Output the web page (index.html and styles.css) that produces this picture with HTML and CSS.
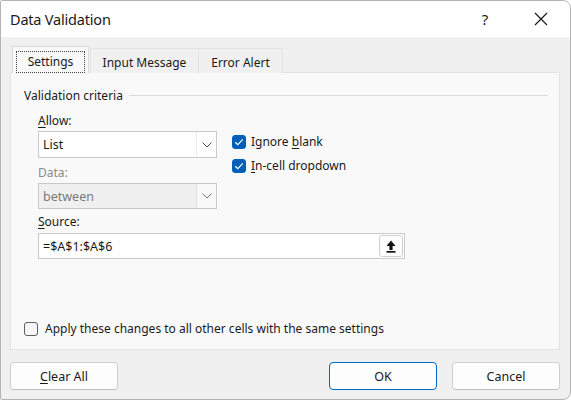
FILE: index.html
```html
<!DOCTYPE html>
<html>
<head>
<meta charset="utf-8">
<link rel="stylesheet" href="styles.css">
</head>
<body>
<div class="window">
  <div class="titlebar">
    <span class="title">Data Validation</span>
    <span class="help">?</span>
    <span class="close">
      <svg width="14" height="14" viewBox="0 0 14 14"><path d="M1 1L13 13M13 1L1 13" stroke="#1a1a1a" stroke-width="1.2" fill="none"/></svg>
    </span>
  </div>
  <div class="content">
    <div class="tabs">
      <div class="tab selected"><span class="focus">Settings</span></div>
      <div class="tab wide">Input Message</div>
      <div class="tab mid">Error Alert</div>
    </div>
    <div class="panel">
      <div class="group-head"><span>Validation criteria</span><span class="rule"></span></div>
      <div class="criteria">
        <div class="left">
          <div class="label"><u>A</u>llow:</div>
          <div class="combo">
            <span class="value">List</span>
            <span class="drop"><svg width="10" height="6" viewBox="0 0 10 6"><path d="M0.5 0.5L5 5L9.5 0.5" stroke="#555" stroke-width="1" fill="none"/></svg></span>
          </div>
          <div class="label disabled">Data:</div>
          <div class="combo off">
            <span class="value">between</span>
            <span class="drop"><svg width="10" height="6" viewBox="0 0 10 6"><path d="M0.5 0.5L5 5L9.5 0.5" stroke="#777" stroke-width="1" fill="none"/></svg></span>
          </div>
        </div>
        <div class="right">
          <label class="check"><span class="box on"><svg width="10" height="8" viewBox="0 0 10 8"><path d="M1.2 4.2L3.8 6.6L8.8 1.4" stroke="#fff" stroke-width="1.2" fill="none"/></svg></span><span class="txt">Ignore <u>b</u>lank</span></label>
          <label class="check"><span class="box on"><svg width="10" height="8" viewBox="0 0 10 8"><path d="M1.2 4.2L3.8 6.6L8.8 1.4" stroke="#fff" stroke-width="1.2" fill="none"/></svg></span><span class="txt"><u>I</u>n-cell dropdown</span></label>
        </div>
      </div>
      <div class="source">
        <div class="label"><u>S</u>ource:</div>
        <div class="textbox">
          <span class="value">=$A$1:$A$6</span>
          <span class="pick"><svg width="10" height="13" viewBox="0 0 10 13"><path d="M5 0.5L9.5 6H6.6V10H3.4V6H0.5Z" fill="#111"/><rect x="0.5" y="11" width="9" height="1.7" fill="#111"/></svg></span>
        </div>
      </div>
      <label class="check apply"><span class="box"></span><span class="txt">Apply these changes to all other cells with the same settings</span></label>
    </div>
    <div class="buttons">
      <button class="btn"><u>C</u>lear All</button>
      <span class="spacer"></span>
      <button class="btn primary">OK</button>
      <button class="btn">Cancel</button>
    </div>
  </div>
</div>
</body>
</html>
```
FILE: styles.css
```css
html, body {
  margin: 0;
  padding: 0;
  background: #ffffff;
}
body {
  width: 571px;
  height: 400px;
  overflow: hidden;
  font-family: "Noto Sans", "Open Sans", sans-serif;
  font-size: 12px;
  color: #1a1a1a;
}
u { text-decoration-thickness: 1px; text-underline-offset: 2px; }
.window {
  box-sizing: border-box;
  width: 571px;
  height: 400px;
  border: 1px solid #b4b4b4;
  border-radius: 2px 8px 8px 2px;
  overflow: hidden;
  display: flex;
  flex-direction: column;
  background: #f0f0f0;
}
.titlebar {
  height: 36px;
  background: #ffffff;
  display: flex;
  align-items: center;
  flex: none;
}
.title {
  font-size: 14.5px;
  margin-left: 9px;
  flex: 1;
  letter-spacing: -0.2px;
}
.help {
  font-size: 15px;
  width: 16px;
  margin-right: 41px;
  text-align: center;
}
.close {
  width: 14px;
  height: 14px;
  margin-right: 22px;
  display: flex;
}
.content {
  flex: 1;
  padding: 9px 10px 0 9px;
  display: flex;
  flex-direction: column;
}
.tabs {
  display: flex;
  height: 27px;
  align-items: flex-end;
  margin-left: 2px;
  position: relative;
  z-index: 1;
  margin-bottom: -1px;
}
.tab {
  box-sizing: border-box;
  height: 25px;
  padding: 2px 0 0;
  border: 1px solid #e3e3e3;
  border-bottom: none;
  margin-left: -1px;
  background: #f0f0f0;
  display: flex;
  align-items: center;
  justify-content: center;
  white-space: nowrap;
}
.tab.wide { width: 109px; margin-left: 1px; }
.tab.mid { width: 85px; }
.tab.selected {
  width: 77px;
  height: 27px;
  padding: 0 3px;
  background: #f9f9f9;
  margin-left: 0;
  border-color: #dcdcdc;
}
.focus {
  border: 1px dotted #444;
  padding: 1px 0 2px;
  width: 100%;
  text-align: center;
  box-sizing: border-box;
  margin-top: 3px;
}
.panel {
  box-sizing: border-box;
  height: 278px;
  background: #f9f9f9;
  border: 1px solid #e3e3e3;
  padding: 13px 12px 0 13px;
  display: flex;
  flex-direction: column;
}
.group-head {
  display: flex;
  align-items: center;
  gap: 6px;
  height: 18px;
  margin-right: -1px;
}
.rule {
  flex: 1;
  height: 1px;
  background: #dcdcdc;
  margin-top: 1px;
}
.criteria {
  display: flex;
  margin-left: 14px;
  margin-top: 8px;
}
.left {
  width: 179px;
  display: flex;
  flex-direction: column;
}
.label {
  height: 17px;
  line-height: 17px;
  margin-bottom: 2px;
}
.label.disabled { color: #8a8a8a; }
.combo {
  box-sizing: border-box;
  height: 27px;
  background: #ffffff;
  border: 1px solid #c9c9c9;
  display: flex;
  align-items: center;
  margin-bottom: 6px;
}
.combo .value {
  flex: 1;
  padding-left: 4px;
  font-size: 12.5px;
}
.combo .drop {
  width: 19px;
  align-self: stretch;
  border-left: 1px solid #ececec;
  display: flex;
  align-items: center;
  justify-content: center;
}
.combo.off {
  height: 26px;
  margin-bottom: 0;
  background: #f0f0f0;
  color: #7a7a7a;
}
.combo.off .drop {
  background: #f9f9f9;
  border-left-color: #dedede;
}
.right {
  margin-left: 15px;
  margin-top: 22px;
  display: flex;
  flex-direction: column;
  gap: 9px;
}
.check {
  display: flex;
  align-items: center;
  gap: 5px;
  height: 15px;
}
.txt { white-space: nowrap; }
.box {
  box-sizing: border-box;
  width: 14px;
  height: 14px;
  border-radius: 3px;
  border: 1px solid #5f5f5f;
  background: #f6f6f6;
  display: flex;
  align-items: center;
  justify-content: center;
  flex: none;
}
.box.on {
  background: #005fb8;
  border-color: #005fb8;
}
.source {
  margin-left: 14px;
  margin-top: 4px;
}
.source .label { margin-bottom: 3px; }
.textbox {
  box-sizing: border-box;
  width: 367px;
  height: 26px;
  background: #ffffff;
  border: 1px solid #c9c9c9;
  display: flex;
  align-items: center;
}
.textbox .value {
  flex: 1;
  padding-left: 4px;
  font-size: 12.5px;
}
.pick {
  box-sizing: border-box;
  width: 24px;
  height: 22px;
  margin-right: 1px;
  border: 1px solid #d0d0d0;
  border-radius: 3px;
  background: #fdfdfd;
  display: flex;
  align-items: center;
  justify-content: center;
}
.apply {
  margin-top: 62px;
  margin-left: 0;
  gap: 7px;
}
.buttons {
  display: flex;
  align-items: center;
  margin-top: 12px;
}
.spacer { flex: 1; }
.btn {
  box-sizing: border-box;
  width: 108px;
  height: 28px;
  background: #fdfdfd;
  border: 1px solid #d0d0d0;
  border-bottom-color: #c0c0c0;
  border-radius: 4px;
  font-family: "Noto Sans", "Open Sans", sans-serif;
  font-size: 12.5px;
  color: #1a1a1a;
  padding: 0;
}
.btn.primary {
  border: 1px solid #0067c0;
  margin-right: 15px;
}
```
